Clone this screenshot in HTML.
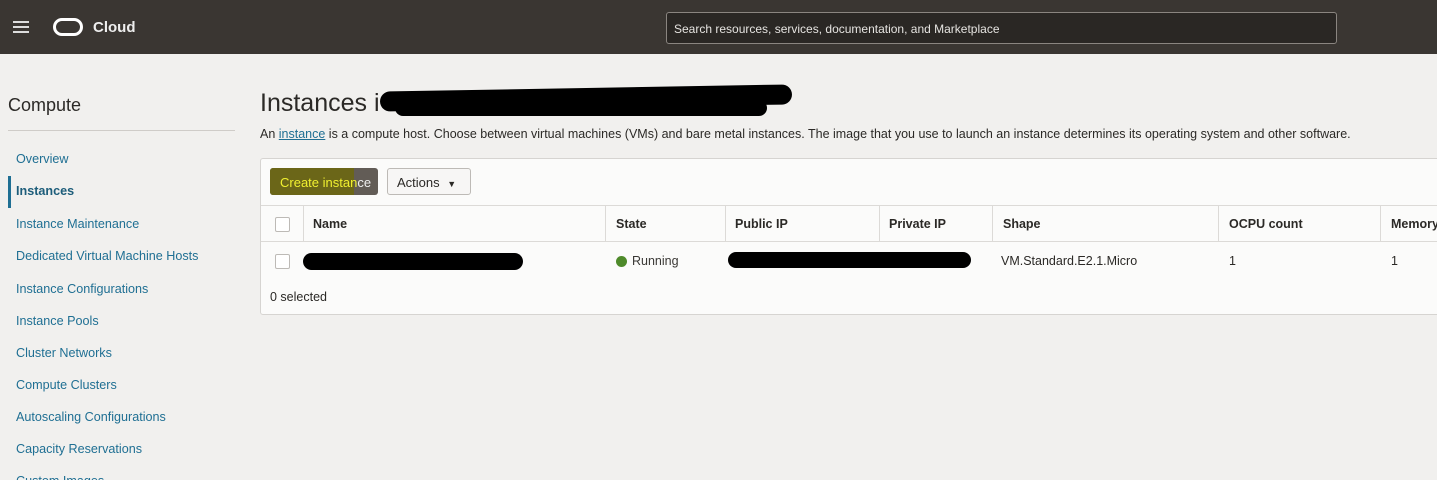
<!DOCTYPE html>
<html><head><style>
*{margin:0;padding:0;box-sizing:border-box}
html,body{width:1437px;height:480px;overflow:hidden}
body{background:#f1f0ee;font-family:"Liberation Sans",Arial,sans-serif;position:relative}
.hdr{position:absolute;left:0;top:0;width:1437px;height:54px;background:#3a3632}
.abs{position:absolute}
.nav a{position:absolute;left:16px;font-size:12.6px;color:#1f6f93;text-decoration:none;white-space:nowrap}
.tbl{position:absolute;left:260px;top:158px;width:1190px;height:157px;background:#fbfbfa;border:1px solid #d6d4d1;border-radius:3px}
.th{position:absolute;top:46px;height:37px;border-top:1px solid #dcdad7;border-bottom:1px solid #dcdad7;width:100%}
.cell{position:absolute;font-size:12.5px;color:#2b2926;white-space:nowrap}
.b{font-weight:bold}
.vl{position:absolute;top:46px;height:37px;width:1px;background:#dcdad7}
.cb{position:absolute;left:14px;width:15px;height:15px;border:1px solid #bdbab6;border-radius:2px;background:#fff}
.blk{position:absolute;background:#000;border-radius:10px}
</style></head><body>
<div class="hdr">
 <div class="abs" style="left:13px;top:21px;width:16px;height:2px;background:#ddd;box-shadow:0 5px 0 #ddd,0 10px 0 #ddd"></div>
 <div class="abs" style="left:53px;top:18px;width:30px;height:18px;border:3px solid #fff;border-radius:9px"></div>
 <div class="abs" style="left:93px;top:19px;color:#eee;font-size:15px;font-weight:bold">Cloud</div>
 <div class="abs" style="left:666px;top:12px;width:671px;height:32px;background:#2a2724;border:1px solid #8a8580;border-radius:3px;color:#e6e4e1;font-size:12px;padding:9px 7px">Search resources, services, documentation, and Marketplace</div>
</div>
<div class="abs" style="left:8px;top:95px;font-size:18px;color:#2b2926">Compute</div>
<div class="abs" style="left:8px;top:130px;width:227px;height:1px;background:#cfccc8"></div>
<div class="abs" style="left:8px;top:176px;width:3px;height:32px;background:#1f6f93"></div>
<div class="nav">
<a style="top:152px">Overview</a>
<a style="top:184px;font-weight:bold;color:#1d5d7a">Instances</a>
<a style="top:217px">Instance Maintenance</a>
<a style="top:249px">Dedicated Virtual Machine Hosts</a>
<a style="top:282px">Instance Configurations</a>
<a style="top:314px">Instance Pools</a>
<a style="top:346px">Cluster Networks</a>
<a style="top:378px">Compute Clusters</a>
<a style="top:410px">Autoscaling Configurations</a>
<a style="top:442px">Capacity Reservations</a>
<a style="top:474px">Custom Images</a>
</div>
<div class="abs" style="left:260px;top:89px;font-size:25px;color:#2b2926">Instances i</div>
<div class="abs" style="left:380px;top:88px;width:412px;height:20px;background:#000;border-radius:10px;transform:rotate(-1deg)"></div>
<div class="abs" style="left:395px;top:100px;width:372px;height:16px;background:#000;border-radius:8px"></div>
<div class="abs" style="left:260px;top:127px;font-size:12.5px;color:#2b2926;white-space:nowrap">An <span style="color:#1f6f93;text-decoration:underline">instance</span> is a compute host. Choose between virtual machines (VMs) and bare metal instances. The image that you use to launch an instance determines its operating system and other software.</div>
<div class="tbl">
 <div class="abs" style="left:9px;top:9px;width:108px;height:27px;background:#625c56;border-radius:3px"></div>
 <div class="abs" style="left:9px;top:9px;width:84px;height:27px;background:#6b6618;border-radius:3px 0 0 3px"></div>
 <div class="abs" style="left:19px;top:16px;font-size:13px;color:#f0f030">Create instan<span style="color:#eee">ce</span></div>
 <div class="abs" style="left:126px;top:9px;width:84px;height:27px;border:1px solid #bdbab6;border-radius:3px;background:#f7f6f5;font-size:13px;color:#2b2926;padding:6px 9px">Actions <span style="font-size:9px;margin-left:4px">▼</span></div>
 <div class="th"></div>
 <div class="vl" style="left:42px"></div><div class="vl" style="left:344px"></div><div class="vl" style="left:464px"></div><div class="vl" style="left:618px"></div><div class="vl" style="left:731px"></div><div class="vl" style="left:957px"></div><div class="vl" style="left:1119px"></div>
 <div class="cb" style="top:58px"></div><div class="cb" style="top:95px"></div>
 <div class="cell b" style="left:52px;top:58px">Name</div>
 <div class="cell b" style="left:355px;top:58px">State</div>
 <div class="cell b" style="left:474px;top:58px">Public IP</div>
 <div class="cell b" style="left:628px;top:58px">Private IP</div>
 <div class="cell b" style="left:742px;top:58px">Shape</div>
 <div class="cell b" style="left:968px;top:58px">OCPU count</div>
 <div class="cell b" style="left:1130px;top:58px">Memory</div>
 <div class="blk" style="left:42px;top:94px;width:220px;height:17px"></div>
 <div class="abs" style="left:355px;top:97px;width:11px;height:11px;border-radius:50%;background:#4e8a2a"></div>
 <div class="cell" style="left:371px;top:95px;color:#3a3835">Running</div>
 <div class="blk" style="left:467px;top:93px;width:243px;height:16px"></div>
 <div class="cell" style="left:740px;top:95px">VM.Standard.E2.1.Micro</div>
 <div class="cell" style="left:968px;top:95px">1</div>
 <div class="cell" style="left:1130px;top:95px">1</div>
 <div class="cell" style="left:9px;top:131px">0 selected</div>
</div>
</body></html>
